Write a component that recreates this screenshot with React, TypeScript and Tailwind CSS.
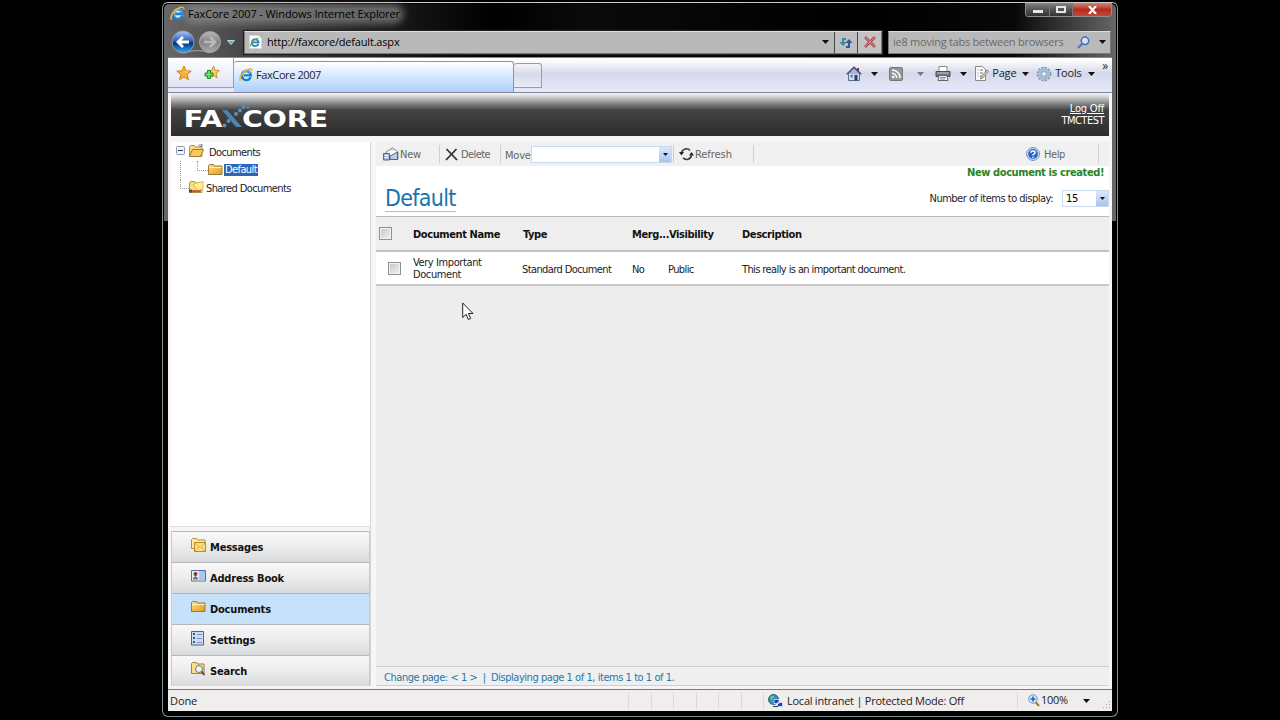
import type { ReactNode } from "react";

const TAHOMA = "font-['DejaVu_Sans_Condensed','DejaVu_Sans',sans-serif]";
const SEGOE = "font-['Open_Sans','Noto_Sans',sans-serif]";

function Caret({ className = "text-[#111]" }: { className?: string }) {
  return (
    <svg className={`shrink-0 ${className}`} width="7" height="4" viewBox="0 0 7 4">
      <path d="M0 0h7L3.5 4z" fill="currentColor" />
    </svg>
  );
}

function IeLogo({ size = 14 }: { size?: number }) {
  return (
    <svg className="shrink-0" width={size} height={size} viewBox="0 0 16 16" fill="none">
      <circle cx="8.2" cy="8.6" r="6" fill="#d9effc" />
      <path d="M13.3 10.4A5.2 5.2 0 1 1 13.6 8.4H5.4" stroke="#1c7fd0" strokeWidth="2.8" />
      <path d="M13.2 6.6A5.4 5.4 0 0 0 4 5" stroke="#55b7f0" strokeWidth="1.2" />
      <path d="M1.6 14.6C-.6 11 4.6 4.2 9.8 2 12.6.8 15 .8 14.8 3.6" stroke="#f0b429" strokeWidth="1.8" />
    </svg>
  );
}

function PageIe() {
  return (
    <svg className="shrink-0" width="13" height="14" viewBox="0 0 13 14" fill="none">
      <path d="M.5.5h9l3 3v10H.5z" fill="#fff" stroke="#d8d8d8" />
      <path d="M9.4 8.9a3.4 3.4 0 1 1 .2-1.6H4" stroke="#2c83b8" strokeWidth="1.8" />
      <path d="M1.5 11.5C1 8.5 5 4 9.5 3" stroke="#6cab3c" strokeWidth="1.2" />
    </svg>
  );
}

function NavButtons() {
  return (
    <svg className="shrink-0" width="66" height="26" viewBox="0 0 66 26">
      <defs>
        <linearGradient id="back" x1="0" y1="0" x2="0" y2="1">
          <stop offset="0" stopColor="#a9c8f2" />
          <stop offset=".45" stopColor="#2d5fb5" />
          <stop offset=".55" stopColor="#0b2f80" />
          <stop offset="1" stopColor="#35b3f5" />
        </linearGradient>
        <linearGradient id="fwd" x1="0" y1="0" x2="0" y2="1">
          <stop offset="0" stopColor="#b9b9b9" />
          <stop offset=".5" stopColor="#838383" />
          <stop offset="1" stopColor="#a8a8a8" />
        </linearGradient>
      </defs>
      <path d="M14 24q14-5 26 0" stroke="#aaa" fill="none" />
      <circle cx="13" cy="13" r="11" fill="url(#back)" stroke="#8c9bb5" />
      <path d="M19 13H8m5-5-5 5 5 5" stroke="#fff" strokeWidth="2.8" fill="none" />
      <circle cx="40" cy="13" r="10.5" fill="url(#fwd)" stroke="#a3a3a3" />
      <path d="M34 13h11m-5-5 5 5-5 5" stroke="#b9b9b9" strokeWidth="2.5" fill="none" />
      <path d="M57.5 11.5h7l-3.5 4z" fill="#6fa5b8" stroke="#b8dbe4" />
    </svg>
  );
}

function Star() {
  return (
    <svg width="16" height="16" viewBox="0 0 16 16">
      <path d="m8 1 2 4.8 5.2.4-4 3.4 1.3 5.1L8 12l-4.500 2.700 1.300-5.100-4-3.400L6 5.800z" fill="#fbb232" stroke="#d08318" />
      <path d="m8 3 1.300 3.500H13L9.500 8z" fill="#ffe08a" />
    </svg>
  );
}

function AddStar() {
  return (
    <svg width="16" height="16" viewBox="0 0 16 16">
      <path d="m9.500 1 1.600 4.200 4.300.3-3.300 2.900 1 4.400-3.600-2.300-3.800 2.300 1.200-4.400-3.200-2.900 4.200-.3z" fill="#f9cf62" stroke="#cc9330" />
      <path d="M3.500 5.500h3V8H9v3H6.500v2.500h-3V11H1V8h2.500z" fill="#6fdc50" stroke="#22852b" />
    </svg>
  );
}

function Home() {
  return (
    <svg width="16" height="16" viewBox="0 0 16 16">
      <path d="M11 2h2v4h-2z" fill="#8a3540" />
      <path d="M2.500 7.500h11v7h-11z" fill="#d3dcea" stroke="#60708c" />
      <path d="m.8 8.300 7.200-7 7.200 7" stroke="#424c70" strokeWidth="1.6" fill="#a9b3d8" />
      <path d="M8.500 9h3v5.500h-3z" fill="#27406b" />
      <path d="M4.500 9h2.200v2.500H4.500z" fill="#477fc0" />
    </svg>
  );
}

function Rss() {
  return (
    <svg width="14" height="14" viewBox="0 0 14 14" fill="none">
      <rect x=".5" y=".5" width="13" height="13" rx="1.5" fill="#97979b" stroke="#77777b" />
      <path d="M3 3a8 8 0 0 1 8 8M3 6.300A4.700 4.700 0 0 1 7.700 11" stroke="#fff" strokeWidth="1.5" />
      <circle cx="4.2" cy="9.9" r="1.2" fill="#fff" />
    </svg>
  );
}

function Printer() {
  return (
    <svg width="16" height="15" viewBox="0 0 16 15">
      <path d="M4 .5h8v5H4z" fill="#fff" stroke="#888" />
      <path d="M1 5.500h14v5H1z" fill="#747780" stroke="#4b4d55" />
      <path d="M2 7h12" stroke="#c5c8cf" />
      <path d="M4 9.500h8l1 5H3z" fill="#f3f6fa" stroke="#666" />
      <path d="M5 11.500h6M5 13h5" stroke="#8a8f99" />
    </svg>
  );
}

function PageIcon() {
  return (
    <svg width="15" height="15" viewBox="0 0 15 15">
      <path d="M1.500.5h7l3 3v11h-10z" fill="#fbfbfb" stroke="#8a8a8a" />
      <path d="M3.500 4h1M6 4h3M3.500 7h1M6 7h3M3.500 10h1M6 10h3" stroke="#777" />
      <path d="m7 11 6-7 1.500 1.300-6 7-2 .7z" fill="#cfd6a0" stroke="#666" strokeWidth=".7" />
    </svg>
  );
}

function Gear() {
  return (
    <svg width="16" height="16" viewBox="0 0 16 16" fill="none">
      <circle cx="8" cy="8" r="6.3" stroke="#8095ac" strokeWidth="2" strokeDasharray="2.2 1.1" />
      <circle cx="8" cy="8" r="4.3" stroke="#a3bdd3" strokeWidth="3.6" />
      <circle cx="8" cy="8" r="2.3" fill="#eef3fa" stroke="#7e93aa" strokeWidth=".8" />
    </svg>
  );
}

function Magnifier() {
  return (
    <svg className="shrink-0" width="13" height="13" viewBox="0 0 13 13" fill="none">
      <path d="M5.500 7.500 1 12" stroke="#5275b5" strokeWidth="2" />
      <circle cx="8" cy="4.8" r="3.7" fill="#d5e3f3" stroke="#3f6cc0" strokeWidth="1.5" />
    </svg>
  );
}

function FaxCoreLogo() {
  return (
    <svg className="block" width="146" height="30" viewBox="0 0 146 30">
      <g className="font-['DejaVu_Sans',sans-serif]" fill="#fff" fontWeight="700" fontSize="23">
        <text x="-1.5" y="24.5" textLength="39" lengthAdjust="spacingAndGlyphs">FA</text>
        <text x="57" y="24.5" textLength="86" lengthAdjust="spacingAndGlyphs">CORE</text>
      </g>
      <path d="M37 8h5l15 17h-6z" fill="#4e84ae" />
      <g fill="#5b93c0">
        <circle cx="39.5" cy="23.5" r="1.9" />
        <circle cx="43.5" cy="19" r="1.9" />
        <circle cx="51" cy="12" r="1.9" />
        <circle cx="55" cy="8.5" r="1.9" />
        <circle cx="58.5" cy="5" r="1.8" />
        <circle cx="63" cy="5.500" r="1.2" />
        <circle cx="63.5" cy="1.5" r="1.2" />
      </g>
    </svg>
  );
}

function Folder({ open = false, shared = false }: { open?: boolean; shared?: boolean }) {
  return (
    <svg className="shrink-0" width="15" height="14" viewBox="0 0 15 14">
      <path d="M.5 12.500v-10l1-1h4l1 1.500h6.500v9.500z" fill="#f5dd83" stroke="#b59349" />
      {open ? (
        <>
          <path d="m.5 12.500 3-7h11l-3 7z" fill="#f9c95c" stroke="#a57a28" />
          <path d="M9 2c1.500-2 3-1.500 4 0m0-2v2.500h-2.500" stroke="#777" fill="none" />
        </>
      ) : (
        <path d="M1 5h11.500v7H1z" fill={shared ? "#f8e372" : "#f0b23e"} />
      )}
      {shared && (
        <>
          <path d="m4 5 3-2 7-1.500v8l-5 1z" fill="#fff08c" stroke="#c7a23c" strokeWidth=".7" />
          <path d="M3 11.500c3-2 5 1.500 9-1" stroke="#c64f38" strokeWidth="2" fill="none" />
          <path d="M0 9.500h3v3H0z" fill="#554b52" />
        </>
      )}
    </svg>
  );
}

function SmallFolder() {
  return (
    <svg className="shrink-0" width="15" height="12" viewBox="0 0 15 12">
      <defs>
        <linearGradient id="fold" x1="0" y1="0" x2="1" y2="1">
          <stop offset="0" stopColor="#ffe08a" />
          <stop offset="1" stopColor="#e09a1c" />
        </linearGradient>
      </defs>
      <path d="M.5 10.500v-9l1-1h4l1 1.500h7.500v8.500z" fill="url(#fold)" stroke="#9c7a38" />
      <path d="M1 3.500h12.500" stroke="#fff0b8" />
    </svg>
  );
}

function MessagesIcon() {
  return (
    <svg width="16" height="14" viewBox="0 0 16 14">
      <path d="M.5 10.500v-9l1-1h4l1 1.500h7.500v8.500z" fill="#fbe9a8" stroke="#b08f4a" />
      <path d="M3.500 4.500h11v9h-11z" fill="#ffdf7c" stroke="#b98a2c" />
      <path d="m4 5 5 4.500L14 5M4 13l3.500-4M14 13l-3.500-4" stroke="#e0aa48" fill="none" />
    </svg>
  );
}

function AddressIcon() {
  return (
    <svg width="15" height="12" viewBox="0 0 15 12">
      <path d="M.5.5h14v10.500H.5z" fill="#e7eff8" stroke="#5c6f96" />
      <path d="M8 1h6v9.500H8z" fill="#a9c8ee" />
      <circle cx="4.5" cy="4" r="2" fill="#7c3634" />
      <path d="M2 9.500V8l2.500-2L7 8v1.500z" fill="#8d6a70" />
    </svg>
  );
}

function SettingsIcon() {
  return (
    <svg width="13" height="15" viewBox="0 0 13 15">
      <path d="M.5.5h12v13.500H.5z" fill="#cddcf1" stroke="#4e5f99" />
      <path d="M2 3h2M2 7h2M2 11h2" stroke="#3c55a0" strokeWidth="2" />
      <path d="M6 3.500h5M6 7.500h5M6 11.500h5" stroke="#7890bd" />
    </svg>
  );
}

function SearchIcon() {
  return (
    <svg width="15" height="14" viewBox="0 0 15 14">
      <path d="M.5 11.500v-10l1-1h4l1 1.500h6.500v9.500z" fill="#f7dd8d" stroke="#a3823e" />
      <circle cx="8" cy="7" r="3.5" fill="#edf3f7" stroke="#777" />
      <path d="m10.500 9.500 3 3.500" stroke="#7d5125" strokeWidth="2" />
    </svg>
  );
}

function NewIcon() {
  return (
    <svg width="16" height="14" viewBox="0 0 16 14">
      <path d="M3 5 9.500.7 15 5v7.500H3z" fill="#e8e9ee" stroke="#8f929c" />
      <path d="m4 5 3-2h5l2.500 2v5H4z" fill="#fff" stroke="#aaa" strokeWidth=".7" />
      <path d="m7 9 7.500-4v7.500H7z" fill="#bccbe6" stroke="#4f648f" />
      <path d="M.5 6.500h6v6.500h-6z" fill="#a9bbdc" stroke="#56658a" />
      <path d="M2 8.500h3M2 10.500h3" stroke="#fff" />
    </svg>
  );
}

function RefreshIcon() {
  return (
    <svg width="15" height="14" viewBox="0 0 15 14">
      <path d="M2.500 5.500A5 5 0 0 1 11 3.500M12.500 8.500A5 5 0 0 1 4 10.800" stroke="#333" strokeWidth="1.5" fill="none" />
      <path d="M0 5h5L2.500 8.500zM10 8.500h5L12.500 5z" fill="#222" />
    </svg>
  );
}

function HelpIcon() {
  return (
    <svg width="14" height="14" viewBox="0 0 14 14">
      <circle cx="7" cy="7" r="6.4" fill="#dce9f8" stroke="#668ac0" />
      <circle cx="7" cy="7" r="4.9" fill="#2b68bd" />
      <path d="M5 5.700C5 3.500 9 3.500 9 5.700 9 7 7 7 7 8.500M7 9.700v1.200" stroke="#fff" strokeWidth="1.5" fill="none" />
    </svg>
  );
}

function IntranetIcon() {
  return (
    <svg width="15" height="14" viewBox="0 0 15 14">
      <circle cx="5.5" cy="5.5" r="5" fill="#2d8fb5" stroke="#28668c" />
      <path d="M2 3c3-3 6 0 3 1.500S5 8 3 7.500z" fill="#78c46a" />
      <path d="M6 5.500h5v4H6zM9.500 8.500h5v4h-5z" fill="#1c3fbd" stroke="#dce5fa" strokeWidth=".8" />
      <path d="M5 12.500h5" stroke="#333" />
    </svg>
  );
}

function ZoomIcon() {
  return (
    <svg width="12" height="13" viewBox="0 0 12 13">
      <path d="m7.500 8 3.500 4" stroke="#a37b42" strokeWidth="2" />
      <circle cx="5" cy="5" r="4.2" fill="#d9ecfc" stroke="#6b93bd" />
      <path d="M5 2.500v5M2.500 5h5" stroke="#2464b0" strokeWidth="1.6" />
    </svg>
  );
}

function TitleBar() {
  return (
    <div className="flex h-[25px] items-start justify-between pl-[6px] pr-1">
      <div className="flex h-[19px] items-center">
        <IeLogo size={15} />
        <div className={`ml-[3px] h-3 whitespace-nowrap rounded-full bg-[#929292]/60 leading-[11px] text-black shadow-[0_0_7px_4px_rgba(146,146,146,0.6)] ${SEGOE} text-[11px] tracking-[-0.1px]`}>
          FaxCore 2007 - Windows Internet Explorer
        </div>
      </div>
      <div className="-mt-px flex h-[14px] overflow-hidden rounded-b-[4px] border border-t-0 border-[#8e8e8e]">
        <div className="flex w-[24px] items-center justify-center border-r border-[#777] bg-linear-to-b from-[#858585] via-[#555] via-50% to-[#333]">
          <div className="mt-[4px] h-[3px] w-[10px] bg-[#e5e5e5]" />
        </div>
        <div className="flex w-[23px] items-center justify-center border-r border-[#777] bg-linear-to-b from-[#858585] via-[#555] via-50% to-[#333]">
          <div className="h-[7px] w-[10px] border-2 border-[#e5e5e5]" />
        </div>
        <div className="flex w-[38px] items-center justify-center bg-linear-to-b from-[#cf8379] via-[#b52a1c] via-50% to-[#c34936]">
          <svg width="9" height="8" viewBox="0 0 9 8">
            <path d="m1 0 7 8M8 0 1 8" stroke="#fff" strokeWidth="2.2" />
          </svg>
        </div>
      </div>
    </div>
  );
}

function AddressRow() {
  return (
    <div className={`flex h-[26px] items-center pl-[6px] pr-[5px] ${SEGOE} whitespace-nowrap text-[11px] tracking-[-0.18px]`}>
      <NavButtons />
      <div className="ml-[8px] flex h-[23px] w-[638px] items-center border border-[#777] border-t-[#ddd] bg-[#b9b9b9] pl-[4px] shadow-[0_0_1px_1px_#222]">
        <PageIe />
        <span className="ml-[5px] grow text-black">http://faxcore/default.aspx</span>
        <Caret />
        <div className="ml-[5px] flex h-full w-[23px] items-center justify-center border-l border-[#444] bg-[#bfbfbf]">
          <svg width="14" height="13" viewBox="0 0 14 13" fill="none">
            <path d="M7 3H4v5" stroke="#348ba5" strokeWidth="2" />
            <path d="M.5 6h7L4 10z" fill="#348ba5" />
            <path d="M7 11h3V6" stroke="#37549d" strokeWidth="2" />
            <path d="M6.500 7h7L10 3z" fill="#37549d" />
          </svg>
        </div>
        <div className="flex h-full w-[24px] items-center justify-center border-l border-[#444] bg-[#c5c2c2]">
          <svg width="12" height="12" viewBox="0 0 12 12">
            <path d="m1 1 10 10M11 1 1 11" stroke="#a6434c" strokeWidth="2.6" />
            <path d="m1 1 10 10M11 1 1 11" stroke="#ed8d90" strokeWidth="1" />
          </svg>
        </div>
      </div>
      <div className="ml-[6px] flex h-[23px] grow items-center border border-[#777] border-t-[#ddd] bg-[#b9b9b9] pl-[4px] pr-[4px]">
        <span className="grow tracking-[-0.25px] text-[#6a6a6a]">ie8 moving tabs between browsers</span>
        <Magnifier />
        <Caret className="ml-[9px] text-[#111]" />
      </div>
    </div>
  );
}

function TabRow() {
  return (
    <div className={`flex h-[35px] justify-between border-b border-[#83869d] bg-linear-to-b from-white from-5% via-[#d5d9ea] via-45% to-[#e6eafa] ${SEGOE} text-[11px] tracking-[-0.18px] text-[#1d1d28]`}>
      <div className="flex">
        <div className="flex h-[30px] w-[66px] items-center gap-3 border-b border-r border-[#9a9eb5] bg-linear-to-b from-white to-[#dfe3f4] pl-[8px]">
          <Star />
          <AddStar />
        </div>
        <div className="mt-[3px] flex h-[31px] w-[280px] items-center rounded-t-[3px] border-r border-t border-[#9095a5] bg-linear-to-b from-white via-[#d8e9fd] via-45% to-[#b0cffc] pb-[4px] pl-[5px]">
          <IeLogo />
          <span className="ml-[3px] pt-px tracking-[-0.4px]">FaxCore 2007</span>
        </div>
        <div className="mt-[5px] h-[25px] w-[28px] rounded-t-[3px] border border-l-0 border-[#9a9aa8] bg-linear-to-b from-[#f5f5f8] via-[#d6d9e7] via-45% to-[#e9ecf8]" />
      </div>
      <div className="flex h-[31px] items-center">
        <Home />
        <Caret className="ml-[9px] text-[#111]" />
        <span className="ml-[11px]"><Rss /></span>
        <Caret className="ml-[14px] text-[#77798a]" />
        <span className="ml-[11px]"><Printer /></span>
        <Caret className="ml-[9px] text-[#111]" />
        <span className="ml-[7px]"><PageIcon /></span>
        <span className="ml-[3px] w-[26px]">Page</span>
        <Caret className="ml-[4px] text-[#111]" />
        <span className="ml-[7px]"><Gear /></span>
        <span className="ml-[3px] w-[28px]">Tools</span>
        <Caret className="ml-[5px] text-[#111]" />
        <span className="mb-[16px] ml-[7px] mr-[4px] text-[12px] leading-none">»</span>
      </div>
    </div>
  );
}

function SiteHeader() {
  return (
    <div className="flex h-[43px] shrink-0 justify-between bg-linear-to-b from-[#eeeeee] from-3% via-[#434343] via-40% to-[#2c2c2c] pl-[14px]">
      <div className="pt-[9px]">
        <FaxCoreLogo />
      </div>
      <div className={`${TAHOMA} pr-[5px] pt-[10px] text-right text-[11px] leading-[12px] text-white`}>
        <div className="underline tracking-[-0.2px]">Log Off</div>
        <div className="tracking-[-0.5px]">TMCTEST</div>
      </div>
    </div>
  );
}

function Tree() {
  return (
    <div className="h-[385px] border-b border-[#ddd] bg-white pl-[5px] pt-px text-[11px] leading-[18px] tracking-[-0.6px] text-[#222]">
      <div className="flex h-[18px] items-center">
        <svg className="mb-[3px]" width="9" height="9" viewBox="0 0 9 9">
          <rect x=".5" y=".5" width="8" height="8" rx="1" fill="#f2f4f8" stroke="#8e9bb0" />
          <path d="M2 4.500h5" stroke="#223a68" />
        </svg>
        <span className="mb-[2px] ml-[4px]"><Folder open /></span>
        <span className="ml-[5px] pt-px">Documents</span>
      </div>
      <div className="ml-[4px] flex h-[19px] border-l border-dotted border-[#999]">
        <div className="ml-[16px] h-[10px] w-[11px] border-b border-l border-dotted border-[#999]" />
        <div className="flex h-[17px] items-center">
          <SmallFolder />
          <span className="ml-[1px] h-[12px] bg-[#2f64b8] px-px leading-[12px] text-white">Default</span>
        </div>
      </div>
      <div className="ml-[4px] flex h-[18px]">
        <div className="h-[9px] w-[9px] border-b border-l border-dotted border-[#999]" />
        <Folder shared />
        <span className="ml-[2px]">Shared Documents</span>
      </div>
    </div>
  );
}

const NAV_ITEMS: { label: string; icon: ReactNode; active?: boolean }[] = [
  { label: "Messages", icon: <MessagesIcon /> },
  { label: "Address Book", icon: <AddressIcon /> },
  { label: "Documents", icon: <SmallFolder />, active: true },
  { label: "Settings", icon: <SettingsIcon /> },
  { label: "Search", icon: <SearchIcon /> },
];

function Sidebar() {
  return (
    <div className="flex w-[200px] shrink-0 flex-col border-r border-[#d4d4d4] bg-[#f5f5f5]">
      <Tree />
      <div className="mt-[4px] border-x border-[#c9ccd0]">
        {NAV_ITEMS.map((item) => (
          <div
            key={item.label}
            className={`flex h-[31px] items-center border-t pl-[19px] text-[11px] font-bold tracking-[-0.2px] text-[#111] ${
              item.active
                ? "border-[#93b8d8] bg-[#c6e2fb]"
                : "border-[#b5b7bb] bg-linear-to-b from-[#f8f8f8] via-[#ececec] via-50% to-[#d8dadd]"
            }`}
          >
            <span className="mb-[4px] flex w-[19px]">{item.icon}</span>
            <span className="pt-[2px]">{item.label}</span>
          </div>
        ))}
      </div>
    </div>
  );
}

function Toolbar() {
  return (
    <div className="flex h-[24px] shrink-0 items-center bg-[#f0f0f0] text-[11px] tracking-[-0.2px] text-[#666]">
      <div className="flex h-[18px] w-[64px] items-center border-r border-[#cfcfcf] pl-[7px]">
        <NewIcon />
        <span className="ml-[1px] pt-[3px]">New</span>
      </div>
      <div className="flex h-[18px] w-[61px] items-center border-r border-[#cfcfcf] pl-[5px]">
        <svg width="13" height="13" viewBox="0 0 13 13">
          <path d="M1.500 1 12 12M11.500 1 1 12" stroke="#333" strokeWidth="1.8" />
        </svg>
        <span className="ml-[3px] pt-[3px] tracking-[-0.6px]">Delete</span>
      </div>
      <div className="flex h-[18px] w-[173px] items-center border-r border-[#cfcfcf] pl-[4px]">
        <span className="w-[26px] pt-[5px]">Move</span>
        <div className="flex h-[17px] w-[141px] justify-end border border-[#c9d9ee] bg-white">
          <div className="flex w-[12px] items-center justify-center bg-linear-to-b from-[#dce8fa] to-[#a9c4ee]">
            <svg width="5" height="3" viewBox="0 0 5 3"><path d="M0 0h5L2.500 3z" fill="#111" /></svg>
          </div>
        </div>
      </div>
      <div className="flex h-[18px] w-[80px] items-center border-r border-[#cfcfcf] pl-[5px]">
        <RefreshIcon />
        <span className="ml-[1px] pt-[3px] tracking-[-0.05px]">Refresh</span>
      </div>
      <div className="ml-auto mr-[10px] flex h-[18px] w-[73px] items-center border-r border-[#cfcfcf]">
        <HelpIcon />
        <span className="ml-[4px] pt-[3px] tracking-[-0.4px]">Help</span>
      </div>
    </div>
  );
}

function Checkbox() {
  return <div className="h-[13px] w-[13px] border border-[#8f8f8f] bg-linear-to-br from-[#c6c6c6] to-[#f3f3f3] shadow-[inset_0_0_0_1px_#f3f3f3]" />;
}

function DocumentList() {
  return (
    <div className="flex grow flex-col">
      <div className="flex h-[51px] shrink-0 items-start justify-between border-b border-[#bbb] bg-white pl-[9px]">
        <div className="mt-[19px] h-[27px] border-b border-[#bbb] text-[23px] leading-[27px] tracking-[-0.7px] text-[#1a73ae]">
          Default
        </div>
        <div className="text-[11px]">
          <div className="pr-[5px] text-right font-bold leading-[13px] tracking-[-0.4px] text-[#278427]">New document is created!</div>
          <div className="mt-[10px] flex items-center justify-end">
            <span className="mr-[9px] pt-[2px] tracking-[-0.5px] text-[#222]">Number of items to display:</span>
            <div className="flex h-[17px] w-[47px] border border-[#c9d9ee] bg-white">
              <span className="w-[34px] pl-[3px] leading-[15px] tracking-[-0.4px]">15</span>
              <div className="flex w-[12px] items-center justify-center bg-linear-to-b from-[#dce8fa] to-[#a9c4ee]">
                <svg width="5" height="3" viewBox="0 0 5 3"><path d="M0 0h5L2.500 3z" fill="#111" /></svg>
              </div>
            </div>
          </div>
        </div>
      </div>
      <div className="grid h-[35px] shrink-0 grid-cols-[37px_110px_109px_37px_73px_1fr] items-center border-b-2 border-[#c2c2c0] bg-[#eeeeee] text-[11px] font-bold tracking-[-0.4px] text-[#111]">
        <div className="pl-[3px]"><Checkbox /></div>
        <div className="pt-1">Document Name</div>
        <div className="pt-1">Type</div>
        <div className="whitespace-nowrap pt-1">Merg...</div>
        <div className="pt-1">Visibility</div>
        <div className="pt-1">Description</div>
      </div>
      <div className="grid h-[34px] shrink-0 grid-cols-[37px_109px_110px_36px_74px_1fr] items-center border-b-2 border-[#c8c8c6] bg-white text-[11px] tracking-[-0.6px] text-[#222]">
        <div className="pl-[12px]"><Checkbox /></div>
        <div className="w-[80px] pt-px leading-[12px] tracking-[-0.4px]">Very Important Document</div>
        <div className="pt-1">Standard Document</div>
        <div className="pt-1">No</div>
        <div className="pt-1">Public</div>
        <div className="pt-1">This really is an important document.</div>
      </div>
      <div className="grow bg-[#ededed]" />
      <div className="h-[20px] shrink-0 whitespace-pre border-y border-[#cfcfcf] bg-[#efefef] pl-[8px] text-[11px] leading-[21px] tracking-[-0.45px] text-[#2478ad]">
        {"Change page: < 1 >  |  Displaying page 1 of 1, items 1 to 1 of 1."}
      </div>
    </div>
  );
}

function StatusBar() {
  return (
    <div className={`flex h-[22px] items-center border-t border-[#777] bg-[#f0eded] ${SEGOE} text-[11px] tracking-[-0.25px] text-[#222]`}>
      <span className="w-[460px] pl-[2px] pt-px tracking-[-0.1px]">Done</span>
      {[0, 1, 2, 3, 4, 5].map((n) => (
        <div key={n} className="h-[17px] w-[22.5px] border-l border-[#dcd8d8]" />
      ))}
      <div className="flex h-[17px] w-[254px] items-center border-l border-[#dcd8d8] pl-[4px]">
        <IntranetIcon />
        <span className="ml-[4px] pt-[2px]">Local intranet | Protected Mode: Off</span>
      </div>
      <div className="flex h-[17px] items-center border-l border-[#dcd8d8] pl-[10px]">
        <ZoomIcon />
        <span className="ml-[1px] w-[30px]">100%</span>
        <Caret className="ml-[12px] text-[#111]" />
      </div>
      <svg className="ml-auto mr-px mt-[8px]" width="8" height="8" viewBox="0 0 8 8">
        <path d="M6 0h1v1H6zM3 3h1v1H3zM6 3h1v1H6zM0 6h1v1H0zM3 6h1v1H3zM6 6h1v1H6z" fill="#a7a4a4" />
      </svg>
    </div>
  );
}

export default function App() {
  return (
    <div className="relative h-[720px] w-[1280px] overflow-hidden bg-black">
      <div className="ml-[162px] h-[717px] w-[956px] pt-[2px]">
        <div className="h-[715px] rounded-[6px] border border-[#7d8f90] border-t-[#ccc] bg-black p-px">
          <div className="flex h-full flex-col rounded-[5px] bg-[linear-gradient(90deg,#686868_0,#4a4a4a_70px,#111_260px,#000_330px,#0b090c_420px,#000_700px,#080808_850px,#666_952px)] bg-[length:100%_217px] bg-no-repeat">
            <TitleBar />
            <AddressRow />
            <div className="mx-[4px] mt-[2px] border-t border-[#888] bg-[#f7f5f5]">
              <TabRow />
              <div className="mx-[3px] flex h-[596px] flex-col">
                <SiteHeader />
                <div className={`flex grow border-t-[6px] border-[#f7f5f5] ${TAHOMA}`}>
                  <Sidebar />
                  <div className="ml-[5px] flex grow flex-col">
                    <Toolbar />
                    <DocumentList />
                  </div>
                </div>
                <div className="h-[3px] shrink-0" />
              </div>
              <StatusBar />
            </div>
          </div>
        </div>
      </div>
      {/* mouse pointer */}
      <svg className="absolute left-[462px] top-[302px]" width="12" height="19" viewBox="0 0 12 19">
        <path d="M.7 1v14.500l3.400-3.200 2.300 5.200 2.300-1-2.300-5h4.600z" fill="#fff" stroke="#222" />
      </svg>
    </div>
  );
}
